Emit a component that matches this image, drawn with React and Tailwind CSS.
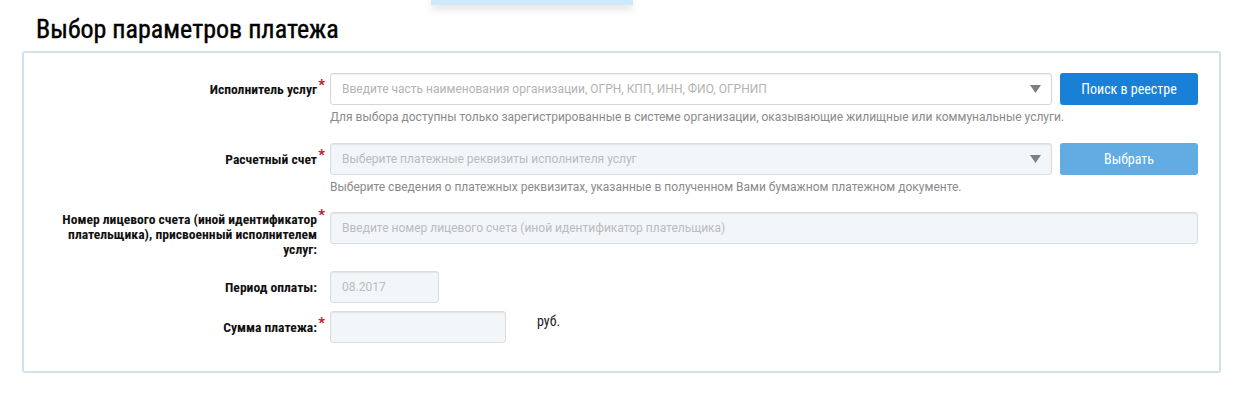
const cond = { fontFamily: '"Roboto Condensed", "Liberation Sans Narrow", "DejaVu Sans Condensed", Roboto, sans-serif' };

const Label = ({ children, required, multi }) => (
  <div className={`w-[306px] shrink-0 flex justify-end pr-[13px] ${multi ? 'items-start pt-0' : 'items-center h-[32px]'}`}>
    <div className="text-right text-[13.6px] leading-[15px] font-bold text-[#111] relative" style={cond}>
      {children}
      {required && <span className="absolute -right-[8px] -top-[4px] text-[#c0172b] text-[15px] font-bold">*</span>}
    </div>
  </div>
);

const Arrow = () => (
  <svg width="11" height="8" viewBox="0 0 11 8" className="shrink-0">
    <path d="M0 0 L11 0 L5.5 8 Z" fill="#7f7f7f" />
  </svg>
);

const inputCls = 'h-[32px] border border-[#d9dde1] rounded-[3px] bg-[#f3f6f9] shadow-[inset_0_1px_1px_rgba(0,0,0,0.07)]';

const App = () => {
  return (
    <div className="relative w-[1238px] h-[397px] bg-white font-['Roboto',sans-serif] overflow-hidden">
      {/* dropdown edge from above */}
      <div className="absolute left-[431px] top-0 w-[202px] h-[5px] bg-[#cde9fb] shadow-[0_3px_8px_rgba(0,0,0,0.18)]" />

      <div className="pl-[36px] pt-[13px] h-[51px]">
        <h1 className="text-[26px] leading-[32px] text-black [-webkit-text-stroke:0.4px_black]" style={cond}>Выбор параметров платежа</h1>
      </div>

      <div className="ml-[22px] w-[1199px] h-[322px] border-2 border-[#d2e2ec] rounded-[3px] pt-[20px]">
        {/* row 1 */}
        <div className="flex">
          <Label required>Исполнитель услуг</Label>
          <div className="flex flex-col">
            <div className="flex gap-[8px]">
              <div className="w-[722px] h-[32px] border border-[#d6d6d6] rounded-[3px] bg-white shadow-[inset_0_1px_1px_rgba(0,0,0,0.06)] flex items-center justify-between pl-[11px] pr-[10px]">
                <span className="text-[12px] text-[#b3b3b3]">Введите часть наименования организации, ОГРН, КПП, ИНН, ФИО, ОГРНИП</span>
                <Arrow />
              </div>
              <button className="w-[138px] h-[32px] rounded-[3px] bg-[#1a7fd6] text-white text-[14px]" style={cond}>Поиск в реестре</button>
            </div>
            <p className="text-[12px] leading-[14px] text-[#8a8a8a] mt-[5px]">Для выбора доступны только зарегистрированные в системе организации, оказывающие жилищные или коммунальные услуги.</p>
          </div>
        </div>

        {/* row 2 */}
        <div className="flex mt-[19px]">
          <Label required>Расчетный счет</Label>
          <div className="flex flex-col">
            <div className="flex gap-[8px]">
              <div className={`w-[722px] ${inputCls} flex items-center justify-between pl-[11px] pr-[10px]`}>
                <span className="text-[12px] text-[#b8bcc0]">Выберите платежные реквизиты исполнителя услуг</span>
                <Arrow />
              </div>
              <button className="w-[138px] h-[32px] rounded-[3px] bg-[#62abe3] text-white text-[14px]" style={cond}>Выбрать</button>
            </div>
            <p className="text-[12px] leading-[14px] text-[#8a8a8a] mt-[5px]">Выберите сведения о платежных реквизитах, указанные в полученном Вами бумажном платежном документе.</p>
          </div>
        </div>

        {/* row 3 */}
        <div className="flex mt-[18px]">
          <Label required multi>Номер лицевого счета (иной идентификатор<br />плательщика), присвоенный исполнителем<br />услуг:</Label>
          <div className={`w-[868px] ${inputCls} flex items-center pl-[11px]`}>
            <span className="text-[12px] text-[#b8bcc0]">Введите номер лицевого счета (иной идентификатор плательщика)</span>
          </div>
        </div>

        {/* row 4 */}
        <div className="flex mt-[14px]">
          <Label>Период оплаты:</Label>
          <div className={`w-[109px] ${inputCls} flex items-center pl-[11px]`}>
            <span className="text-[12px] text-[#b8bcc0]">08.2017</span>
          </div>
        </div>

        {/* row 5 */}
        <div className="flex mt-[8px]">
          <Label required>Сумма платежа:</Label>
          <div className={`w-[176px] ${inputCls}`} />
          <span className="ml-[31px] mt-0 text-[14px] text-[#222]" style={cond}>руб.</span>
        </div>
      </div>
    </div>
  );
};

export default App;
